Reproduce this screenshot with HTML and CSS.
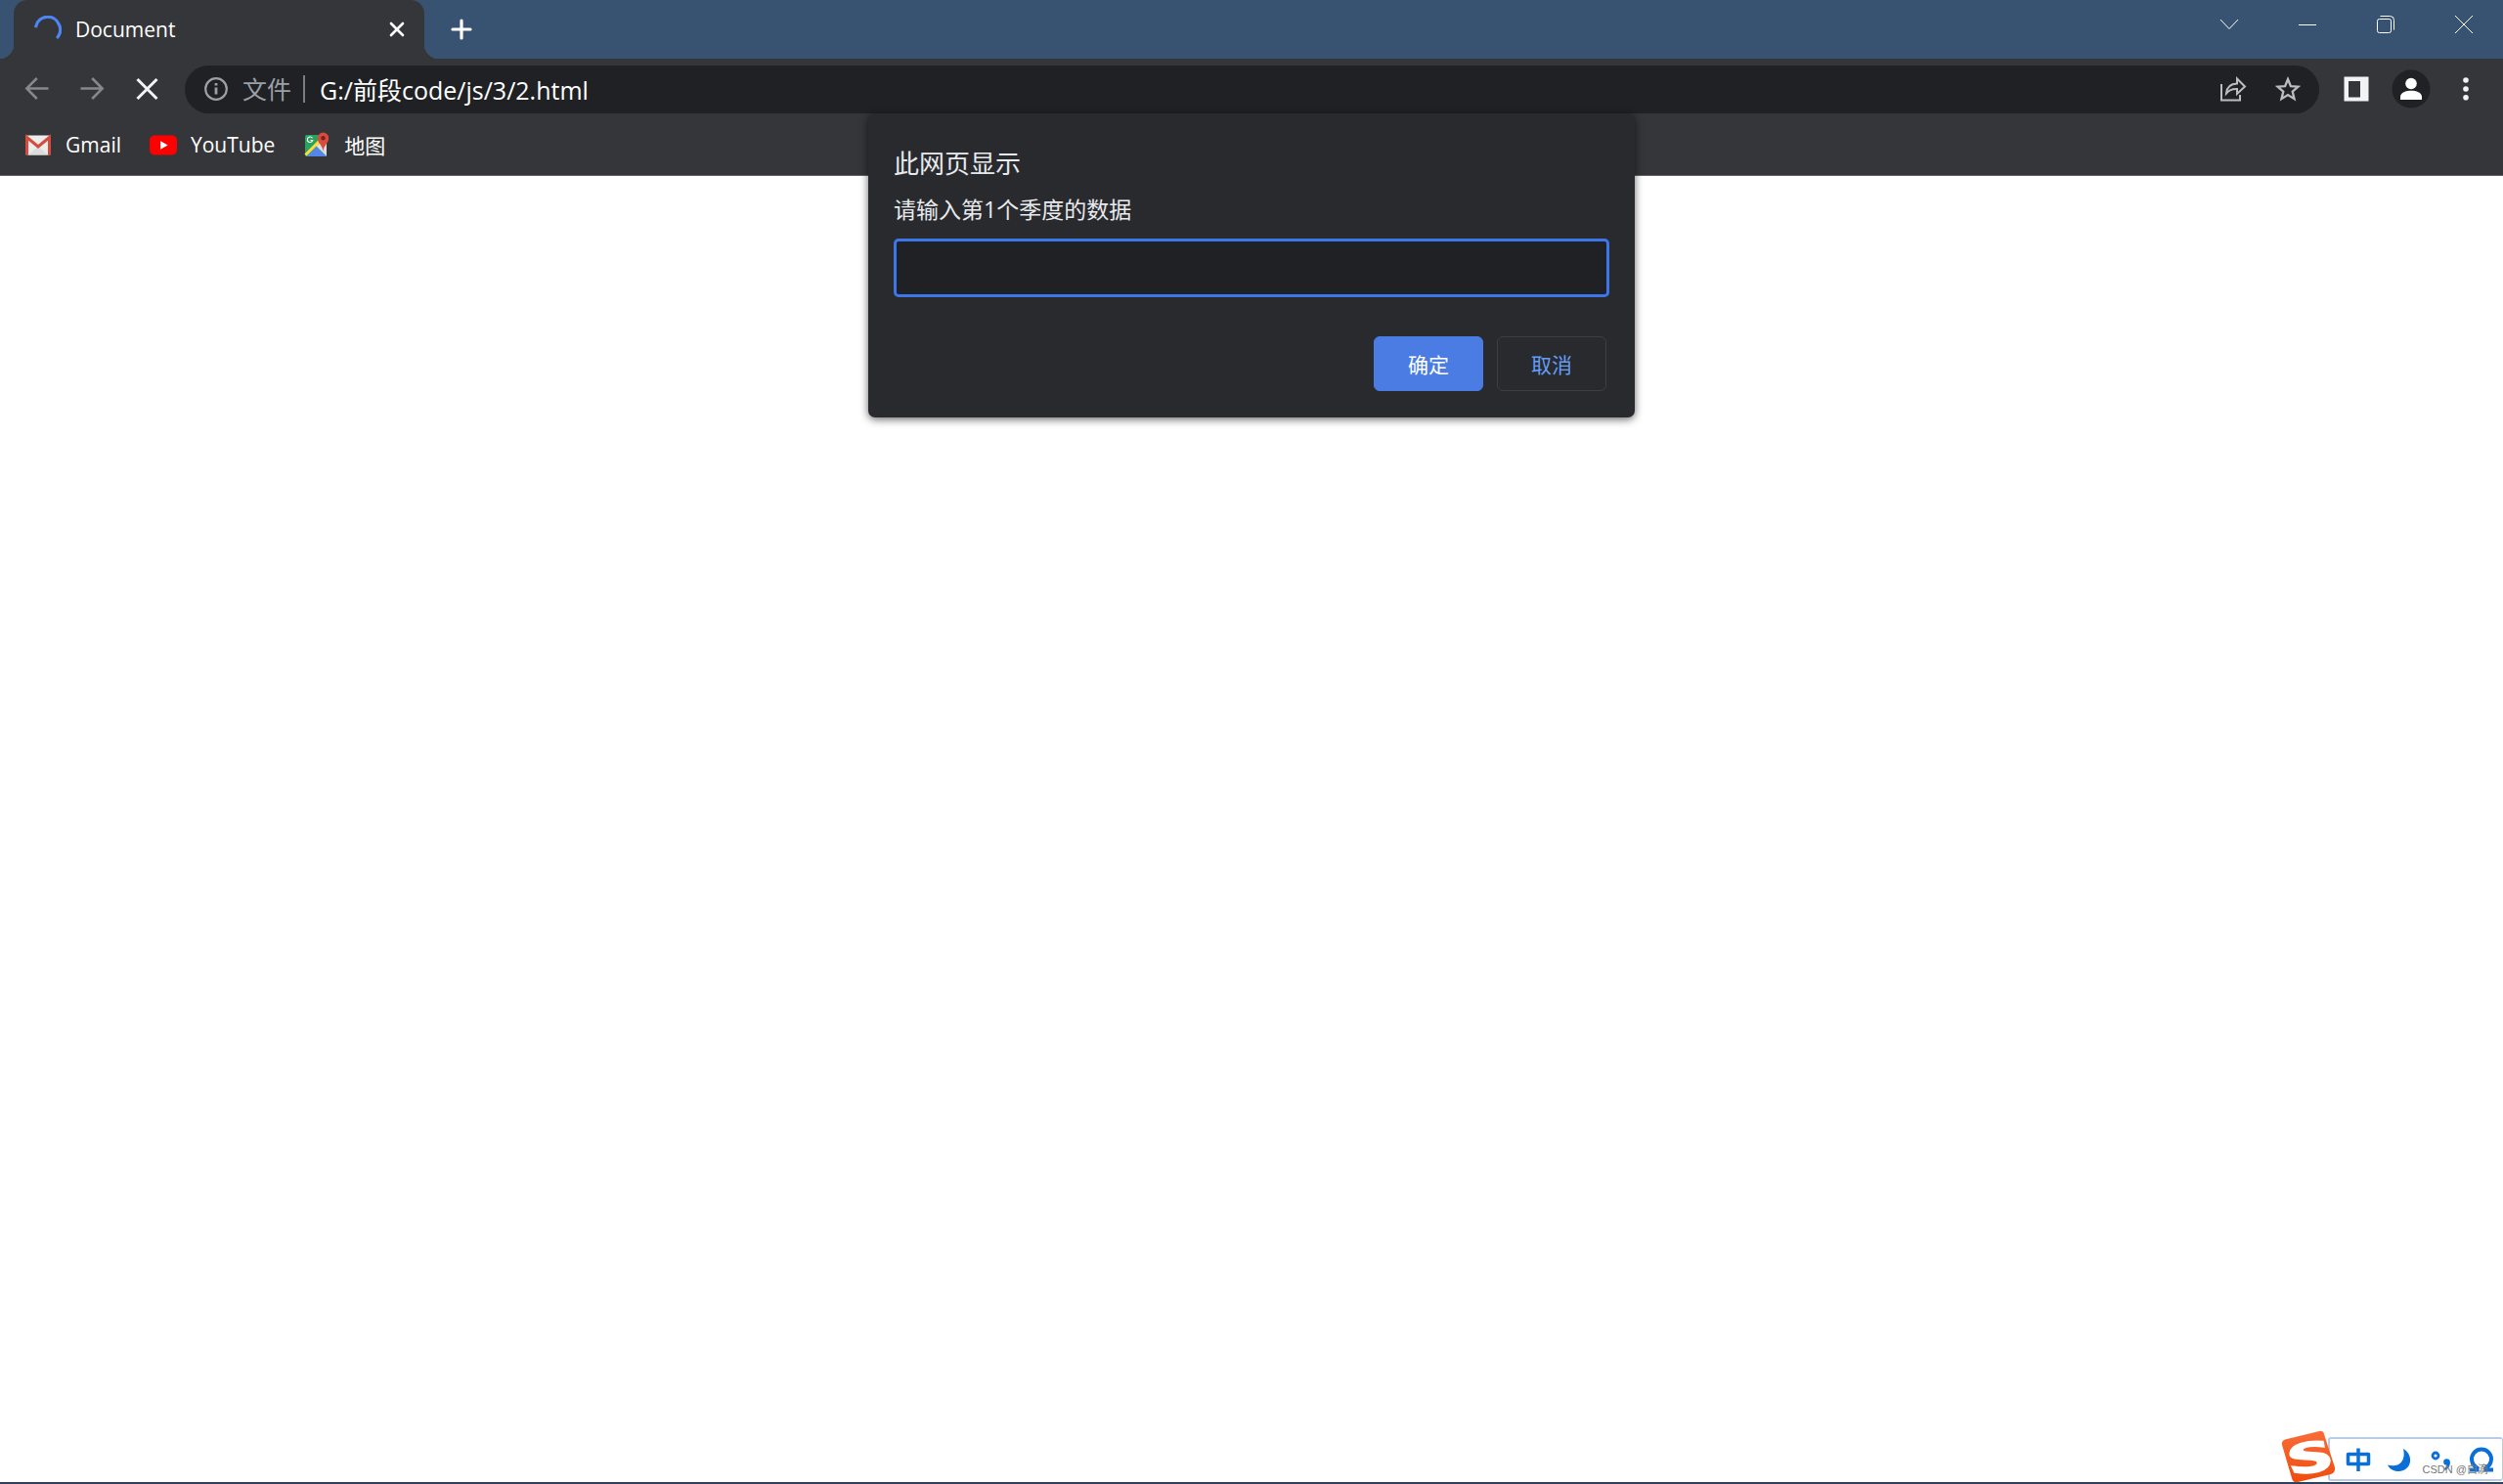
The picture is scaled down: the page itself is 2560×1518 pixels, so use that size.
FILE: index.html
```html
<!DOCTYPE html>
<html lang="zh-CN">
<head>
  <meta charset="UTF-8" />
  <meta name="viewport" content="width=device-width, initial-scale=1" />
  <title>Document</title>
  <link rel="stylesheet" href="styles.css">
</head>
<body>
  <header class="browser">
    <div class="tabstrip">
      <div class="tab">
        <svg class="spinner" width="28" height="28" viewBox="0 0 28 28"><path d="M1.800 10.800A12.300 12.300 0 0 1 25 8.500A12.300 12.300 0 0 1 24 22" fill="none" stroke="#4f84f3" stroke-width="3.200" stroke-linecap="round"/></svg>
        <span class="tab-title">Document</span>
        <button class="tab-close" aria-label="关闭标签页">
          <svg width="16" height="16" viewBox="0 0 16 16"><path d="M2 2L14 14M14 2L2 14" stroke="#fff" stroke-width="2.600" stroke-linecap="round"/></svg>
        </button>
      </div>
      <button class="new-tab" aria-label="打开新的标签页">
        <svg width="22" height="22" viewBox="0 0 22 22"><path d="M11 2V20M2 11H20" stroke="#fff" stroke-width="3.200" stroke-linecap="round"/></svg>
      </button>
      <div class="window-controls">
        <button aria-label="搜索标签页"><svg width="20" height="20" viewBox="0 0 20 20"><path d="M1 5L10 14.500L19 5"/></svg></button>
        <button aria-label="最小化"><svg width="20" height="20" viewBox="0 0 20 20"><path d="M1 10.500H19"/></svg></button>
        <button aria-label="还原"><svg width="20" height="20" viewBox="0 0 20 20"><rect x="1.500" y="4.500" width="14" height="14" rx="2"/><path d="M4.500 1.500H14.500A4 4 0 0 1 18.500 5.500V15.500"/></svg></button>
        <button aria-label="关闭"><svg width="20" height="20" viewBox="0 0 20 20"><path d="M1 1L19 19M19 1L1 19"/></svg></button>
      </div>
    </div>

    <div class="toolbar">
      <div class="nav">
        <button aria-label="后退"><svg width="26" height="26" viewBox="0 0 26 26"><path d="M24.500 12.500H3M12.800 2L2.300 12.500L12.800 23" fill="none" stroke="#87888b" stroke-width="2.500"/></svg></button>
        <button aria-label="前进"><svg width="26" height="26" viewBox="0 0 26 26"><path d="M1.500 12.500H23M13.200 2L23.700 12.500L13.200 23" fill="none" stroke="#87888b" stroke-width="2.500"/></svg></button>
        <button aria-label="停止加载"><svg width="26" height="26" viewBox="0 0 26 26"><path d="M3.500 3L23.500 23M23.500 3L3.500 23" stroke="#f1f3f4" stroke-width="3"/></svg></button>
      </div>
      <div class="omnibox">
        <svg class="info" width="24" height="24" viewBox="0 0 24 24"><circle cx="12" cy="12" r="10.800" fill="none" stroke="#9aa0a6" stroke-width="2.200"/><path d="M12 6V8.600M12 10.500V17.500" stroke="#9aa0a6" stroke-width="2.800"/></svg>
        <span class="scheme">文件</span>
        <input class="url" type="text" value="G:/前段code/js/3/2.html" aria-label="地址栏" />
        <button class="icon-btn" aria-label="分享"><svg width="28" height="26" viewBox="0 0 28 26"><path d="M2 8V24.500H21V19" fill="none" stroke="#bdbdbe" stroke-width="2"/><path d="M7 17.500C7.500 11.500 11 7.700 18 7.500V2.500L26 10.500L18 18V13C13.500 12.700 10 14 7 17.500Z" fill="none" stroke="#bdbdbe" stroke-width="2"/></svg></button>
        <button class="icon-btn" aria-label="添加书签"><svg width="26" height="26" viewBox="0 0 26 26"><path d="M13 3L15.900 10.100L23.500 10.700L17.700 15.600L19.500 23.100L13 19L6.500 23.100L8.300 15.600L2.500 10.700L10.100 10.100Z" fill="none" stroke="#bdbdbe" stroke-width="2.300"/></svg></button>
      </div>
      <div class="actions">
        <button class="icon-btn" aria-label="侧边栏"><svg width="26" height="26" viewBox="0 0 26 26"><path d="M0.500 0.500H25.500V25.500H0.500ZM5 5V21.500H17V5Z" fill="#f1f3f4" fill-rule="evenodd"/></svg></button>
        <button class="icon-btn" aria-label="用户"><svg width="40" height="40" viewBox="0 0 40 40"><circle cx="20" cy="20" r="19.500" fill="#202124"/><circle cx="20" cy="14.500" r="5.800" fill="#fff"/><path d="M9 31V28C9 23.500 15 21.700 20 21.700S31 23.500 31 28V31Z" fill="#fff"/></svg></button>
        <button class="icon-btn" aria-label="菜单"><svg width="8" height="26" viewBox="0 0 8 26"><g fill="#f1f3f4"><circle cx="4" cy="4" r="2.800"/><circle cx="4" cy="13" r="2.800"/><circle cx="4" cy="21.800" r="2.800"/></g></svg></button>
      </div>
    </div>

    <nav class="bookmarks">
      <a href="#">
        <svg width="28" height="28" viewBox="0 0 28 28"><rect x="1" y="4.500" width="26" height="20" rx="2" fill="#ececec"/><path d="M4 24.500L14 15.500L24 24.500Z" fill="#dcdcdc"/><path d="M2.500 24.500V6.500L14 16L25.500 6.500V24.500" fill="none" stroke="#d54b3d" stroke-width="3"/></svg>
        Gmail
      </a>
      <a href="#">
        <svg width="28" height="28" viewBox="0 0 28 28"><rect y="4.500" width="28" height="20" rx="5" fill="#f00"/><path d="M11.200 10.200V18.800L18.600 14.500Z" fill="#fff"/></svg>
        YouTube
      </a>
      <a href="#">
        <svg width="28" height="28" viewBox="0 0 28 28"><rect x="2" y="4" width="22" height="22" rx="1.500" fill="#2aa25d"/><path d="M13 15L24 26V8Z" fill="#dedede"/><path d="M13.500 16L24 26H4Z" fill="#5586ec"/><path d="M2.500 24.500L18 9" stroke="#ffdc3d" stroke-width="3"/><path d="M9.500 7.300A2.800 2.800 0 1 0 9.800 9.500H7.500" fill="none" stroke="#fff" stroke-width="1.100"/><path d="M20.500 21C20 14.500 14.800 12.500 14.800 7.300A5.700 5.700 0 0 1 26.200 7.300C26.200 12.500 21 14.500 20.500 21Z" fill="#db4a3d"/><circle cx="20.500" cy="7.200" r="2.200" fill="#74231e"/></svg>
        地图
      </a>
    </nav>
  </header>

  <main class="page"></main>

  <form class="dialog" role="dialog" aria-labelledby="dialogTitle">
    <h1 id="dialogTitle">此网页显示</h1>
    <label for="quarterInput">请输入第1个季度的数据</label>
    <input id="quarterInput" type="text" />
    <div class="dialog-buttons">
      <button class="btn btn-primary" type="button">确定</button>
      <button class="btn" type="button">取消</button>
    </div>
  </form>

  <div class="ime">
    <svg class="ime-logo" width="56" height="56" viewBox="0 0 56 56">
      <defs><linearGradient id="sogou" x1="0" y1="0" x2="0" y2="1"><stop offset="0" stop-color="#f96c39"/><stop offset="1" stop-color="#f04c0c"/></linearGradient></defs>
      <path d="M4 9.500L39 1Q43 0 44 4L55 38Q56 43 51 45L17 53Q12 54 11 49L1 15Q0 11 4 9.500Z" fill="url(#sogou)"/>
      <path d="M43 11.500C28 10 9 14 9 24C9.500 34 36 26 37.500 33C38 38.500 24 39 11 37L14 43C32 46 50 42 50 31C49 18 23 26 22 20.500C22 16 34 15.500 44 17Z" fill="#fff" stroke="#fff" stroke-width="1.500"/>
    </svg>
    <svg width="26" height="26" viewBox="0 0 26 26"><path d="M13 1.500V25M2.500 7.500H23.500V17.500H2.500Z" fill="none" stroke="#0b6fd8" stroke-width="3.500" stroke-linejoin="round"/></svg>
    <svg width="26" height="26" viewBox="0 0 26 26"><path d="M17 2C28 8 26 24 13 25C8 25.500 3 23 1 18.500C13 22 20 14 17 2Z" fill="#0b6fd8"/></svg>
    <svg width="26" height="26" viewBox="0 0 26 26"><circle cx="8" cy="9" r="3" fill="none" stroke="#0b6fd8" stroke-width="2.800"/><circle cx="19.500" cy="15.500" r="3.300" fill="#0b6fd8"/><path d="M22.800 15.500C23 20 21 22.500 17.500 24L17 22C19 21 19.800 19.500 19.500 17Z" fill="#0b6fd8"/></svg>
    <svg width="26" height="26" viewBox="0 0 26 26"><path d="M1 23.500H8.500V21.500A10 10 0 1 1 17.500 21.500V23.500H25" fill="none" stroke="#0b6fd8" stroke-width="4"/></svg>
    <span class="watermark">CSDN @白滴</span>
  </div>
</body>
</html>
```
FILE: styles.css
```css
* {
  box-sizing: border-box;
  margin: 0;
  padding: 0;
}
body {
  font-family: "Open Sans", "Noto Sans CJK SC", sans-serif;
  font-size: 21px;
  display: flex;
  flex-direction: column;
  min-height: 100vh;
  background: #fff;
  color: #fff;
}
button {
  border: none;
  background: none;
  font: inherit;
  color: inherit;
  display: flex;
  align-items: center;
  justify-content: center;
}
svg {
  display: block;
  flex: none;
}
.browser {
  background: #35363a;
  border-bottom: 1px solid #5f6064;
}

/* tabs */
.tabstrip {
  display: flex;
  height: 60px;
  padding-left: 14px;
  background: #385371;
}
.tab {
  position: relative;
  display: flex;
  align-items: center;
  width: 420px;
  padding: 0 18px 0 21px;
  background: #35363a;
  border-radius: 14px 14px 0 0;
}
.tab::before,
.tab::after {
  content: "";
  position: absolute;
  bottom: 0;
  width: 14px;
  height: 14px;
}
.tab::before {
  right: 100%;
  background: radial-gradient(circle at 0 0, transparent 14px, #35363a 14px);
}
.tab::after {
  left: 100%;
  background: radial-gradient(circle at 100% 0, transparent 14px, #35363a 14px);
}
.tab-title {
  flex: 1;
  margin-left: 14px;
}
.tab-close {
  width: 20px;
  height: 20px;
}
.new-tab {
  width: 44px;
  margin-left: 16px;
}
.window-controls {
  display: flex;
  height: 50px;
  margin-left: auto;
}
.window-controls button {
  width: 80px;
}
.window-controls svg {
  fill: none;
  stroke: #fff;
  stroke-width: 1;
}

/* address row */
.toolbar {
  display: flex;
  align-items: center;
  height: 62px;
  padding: 0 10px;
}
.nav,
.actions {
  display: flex;
}
.nav button,
.icon-btn {
  width: 56px;
  height: 48px;
}
.omnibox {
  flex: 1;
  display: flex;
  align-items: center;
  height: 49px;
  margin: 0 10px 0 11px;
  padding: 0 4px 0 20px;
  border-radius: 25px;
  background: #202124;
  font-size: 25px;
}
.scheme {
  margin-left: 15px;
  padding-right: 12px;
  line-height: 28px;
  border-right: 2px solid #7b7d80;
  color: #9aa0a6;
}
.url {
  flex: 1;
  min-width: 0;
  padding-left: 15px;
  border: none;
  outline: none;
  background: none;
  color: #fff;
  font: inherit;
}

/* bookmarks */
.bookmarks {
  display: flex;
  align-items: center;
  gap: 29px;
  height: 57px;
  padding: 0 25px 6px;
}
.bookmarks a {
  display: flex;
  align-items: center;
  gap: 14px;
  color: #fff;
  text-decoration: none;
}

.page {
  flex: 1;
  border-bottom: 2px solid #2d405e;
}

/* prompt */
.dialog {
  position: absolute;
  top: 116px;
  left: 50%;
  transform: translateX(-50%);
  display: flex;
  flex-direction: column;
  width: 784px;
  padding: 31px 26px 27px;
  border-radius: 7px;
  background: #292a2d;
  box-shadow: 0 2px 8px rgba(0, 0, 0, 0.6);
  color: #e8eaed;
}
.dialog h1 {
  font-size: 26px;
  font-weight: 400;
  line-height: 40px;
}
.dialog label {
  margin: 10px 0 13px;
  font-size: 23px;
  line-height: 34px;
}
.dialog input {
  height: 60px;
  padding: 0 12px;
  border: 3px solid #3b76ea;
  border-radius: 5px;
  outline: none;
  background: #202124;
  color: #e8eaed;
  font: inherit;
}
.dialog-buttons {
  display: flex;
  justify-content: flex-end;
  gap: 14px;
  margin-top: 40px;
  padding-right: 3px;
}
.btn {
  width: 112px;
  height: 56px;
  border: 1px solid #3c4043;
  border-radius: 6px;
  color: #669df6;
}
.btn-primary {
  border-color: #4a7ce3;
  background: #4a7ce3;
  color: #fff;
}

/* input method bar */
.ime {
  position: fixed;
  right: 0;
  bottom: 3px;
  display: flex;
  align-items: center;
  gap: 16px;
  height: 45px;
  padding-right: 8px;
  border: 2px solid #b9cbe6;
  border-right-width: 1px;
  border-radius: 3px;
  background: #fff;
}
.ime-logo {
  margin: 0 -6px 4px -50px;
}
.watermark {
  position: absolute;
  right: 14px;
  bottom: 2px;
  font: 11px/16px "Liberation Sans", "Noto Sans CJK SC", sans-serif;
  color: #777;
}
```
